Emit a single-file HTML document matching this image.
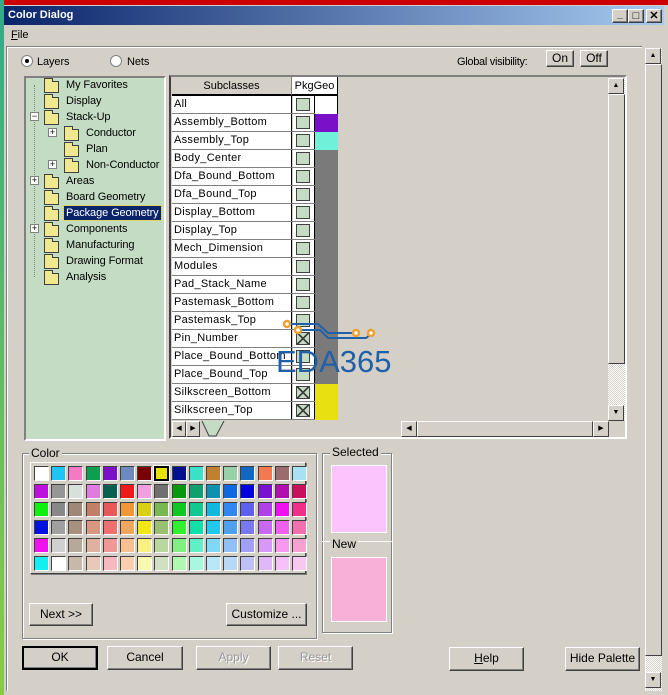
<!DOCTYPE html>
<html><head><meta charset="utf-8"><style>
*{box-sizing:border-box;margin:0;padding:0}
body{width:668px;height:695px;overflow:hidden;background:#d4d0c8;font-family:"Liberation Sans",sans-serif;font-size:11px;color:#000;position:relative}
.a{position:absolute}
.btn{position:absolute;background:#d4d0c8;border:1px solid;border-color:#fff #404040 #404040 #fff;box-shadow:inset -1px -1px 0 #808080;text-align:center;font-size:12px;line-height:20px}
.sunk{border:1px solid;border-color:#808080 #fff #fff #808080}
.grp{position:absolute;border:1px solid #808080;box-shadow:1px 1px 0 #fff, inset 1px 1px 0 #fff}
.lbl{position:absolute;background:#d4d0c8;padding:0 2px;font-size:12px;line-height:12px}
.ti{position:absolute;font-size:12px;line-height:14px;white-space:nowrap}
.tr{font-size:11px;letter-spacing:-.1px}
.fold{position:absolute;width:15px;height:12px;background:#f0e890;border:1px solid #404040}
.fold:before{content:"";position:absolute;left:-1px;top:-4px;width:7px;height:3px;background:#f0e890;border:1px solid #404040;border-bottom:none}
.pl{position:absolute;width:9px;height:9px;border:1px solid #808080;background:#fff;font-size:9px;line-height:7px;text-align:center}
.row{position:absolute;left:172px;width:166px;height:18px;border-bottom:1px solid #808080}
.row .n{position:absolute;left:0;top:0;width:120px;height:17px;background:#fff;border-right:1px solid #000;padding-left:2px;font-size:11px;line-height:17px;letter-spacing:.3px;white-space:nowrap;overflow:hidden}
.row .c{position:absolute;left:121px;top:0;width:22px;height:17px;background:#fff;border-right:1px solid #000}
.row .c i{position:absolute;left:3px;top:2px;width:14px;height:13px;background:#c4dcc4;border:1px solid #404040}
.row .k{position:absolute;left:143px;top:0;width:23px;height:18px;background:#7a7a7a}
.x:after{content:"";position:absolute;inset:0;background:linear-gradient(45deg,transparent 45%,#404040 45%,#404040 55%,transparent 55%),linear-gradient(-45deg,transparent 45%,#404040 45%,#404040 55%,transparent 55%)}
.sb{position:absolute;background:#e8e6e0}
.arr{position:absolute;width:16px;height:16px;background:#d4d0c8;border:1px solid;border-color:#fff #404040 #404040 #fff;font-size:7px;line-height:14px;text-align:center}
</style></head><body>
<div class="a" style="left:0;top:0;width:668px;height:5px;background:#c00"></div>
<div class="a" style="left:0;top:0;width:4px;height:695px;background:linear-gradient(#3a8,#8c4)"></div>
<div class="a" style="top:5px;left:4px;width:664px;height:690px;background:#d4d0c8"></div>
<div class="a" style="left:4px;top:6px;width:660px;height:19px;background:linear-gradient(90deg,#0a246a,#a6caf0);color:#fff;font-weight:bold;font-size:11px;line-height:19px;padding-left:4px">Color Dialog</div>
<div class="btn" style="left:612px;top:9px;width:16px;height:14px;font-size:10px;line-height:10px;font-weight:bold">_</div>
<div class="btn" style="left:628px;top:9px;width:16px;height:14px;font-size:11px;line-height:12px">□</div>
<div class="btn" style="left:646px;top:9px;width:16px;height:14px;font-size:11px;line-height:12px;font-weight:bold">✕</div>
<div class="ti tr" style="left:11px;top:28px"><u>F</u>ile</div>
<div class="a" style="left:6px;top:46px;width:636px;height:645px;border-top:1px solid #808080;border-left:1px solid #808080;box-shadow:inset 1px 1px 0 #fff"></div>
<!-- outer scrollbar -->
<div class="sb" style="left:645px;top:48px;width:17px;height:643px;background:repeating-conic-gradient(#fff 0 25%,#d4d0c8 0 50%) 0 0/2px 2px;border-left:1px solid #fff"></div>
<div class="arr" style="left:645px;top:48px">▲</div>
<div class="a" style="left:645px;top:64px;width:17px;height:592px;background:#d4d0c8;border:1px solid;border-color:#fff #404040 #404040 #fff"></div>
<div class="arr" style="left:645px;top:672px">▼</div>
<!-- radio -->
<div class="a" style="left:21px;top:55px;width:12px;height:12px;border-radius:50%;background:#fff;border:1px solid #808080"></div>
<div class="a" style="left:25px;top:59px;width:4px;height:4px;border-radius:50%;background:#000"></div>
<div class="ti tr" style="left:37px;top:55px">Layers</div>
<div class="a" style="left:110px;top:55px;width:12px;height:12px;border-radius:50%;background:#fff;border:1px solid #808080"></div>
<div class="ti tr" style="left:127px;top:55px">Nets</div>
<div class="ti" style="left:457px;top:55px;font-size:11px;letter-spacing:-.3px">Global visibility:</div>
<div class="btn" style="left:546px;top:50px;width:28px;height:17px;line-height:14px">On</div>
<div class="btn" style="left:580px;top:50px;width:28px;height:17px;line-height:14px">Off</div>
<!-- tree -->
<div class="a sunk" style="left:24px;top:76px;width:142px;height:365px;background:#c4dcc4;border-width:2px"></div>
<div class="a" style="left:34px;top:85px;width:0;height:192px;border-left:1px dotted #808080"></div>
<div class="fold" style="left:44px;top:81px"></div><div class="ti tr" style="left:66px;top:78px">My Favorites</div>
<div class="fold" style="left:44px;top:97px"></div><div class="ti tr" style="left:66px;top:94px">Display</div>
<div class="pl" style="left:30px;top:112px">−</div><div class="fold" style="left:44px;top:113px"></div><div class="ti tr" style="left:66px;top:110px">Stack-Up</div>
<div class="pl" style="left:48px;top:128px">+</div><div class="fold" style="left:64px;top:129px"></div><div class="ti tr" style="left:86px;top:126px">Conductor</div>
<div class="fold" style="left:64px;top:145px"></div><div class="ti tr" style="left:86px;top:142px">Plan</div>
<div class="pl" style="left:48px;top:160px">+</div><div class="fold" style="left:64px;top:161px"></div><div class="ti tr" style="left:86px;top:158px">Non-Conductor</div>
<div class="pl" style="left:30px;top:176px">+</div><div class="fold" style="left:44px;top:177px"></div><div class="ti tr" style="left:66px;top:174px">Areas</div>
<div class="fold" style="left:44px;top:193px"></div><div class="ti tr" style="left:66px;top:190px">Board Geometry</div>
<div class="fold" style="left:44px;top:209px"></div><div class="ti tr" style="left:64px;top:206px;background:#0a246a;color:#fff;padding:0 2px;outline:1px dotted #fc0">Package Geometry</div>
<div class="pl" style="left:30px;top:224px">+</div><div class="fold" style="left:44px;top:225px"></div><div class="ti tr" style="left:66px;top:222px">Components</div>
<div class="fold" style="left:44px;top:241px"></div><div class="ti tr" style="left:66px;top:238px">Manufacturing</div>
<div class="fold" style="left:44px;top:257px"></div><div class="ti tr" style="left:66px;top:254px">Drawing Format</div>
<div class="fold" style="left:44px;top:273px"></div><div class="ti tr" style="left:66px;top:270px">Analysis</div>
<!-- table area -->
<div class="a sunk" style="left:169px;top:75px;width:458px;height:364px;border-width:2px;border-color:#808080 #fff #fff #404040"></div>
<div class="a" style="left:172px;top:77px;width:120px;height:19px;border-right:1px solid #808080;border-bottom:2px solid #000;text-align:center;font-size:11px;line-height:18px">Subclasses</div>
<div class="a" style="left:292px;top:77px;width:46px;height:19px;background:#fff;border-right:1px solid #000;border-bottom:2px solid #000;text-align:center;font-size:11px;line-height:18px">PkgGeo</div>
<div class="row" style="top:96px"><div class="n">All</div><div class="c"><i></i></div><div class="k" style="background:#fff;border-right:1px solid #000"></div></div>
<div class="row" style="top:114px"><div class="n">Assembly_Bottom</div><div class="c"><i></i></div><div class="k" style="background:#7a10c8"></div></div>
<div class="row" style="top:132px"><div class="n">Assembly_Top</div><div class="c"><i></i></div><div class="k" style="background:#70f0d8"></div></div>
<div class="row" style="top:150px"><div class="n">Body_Center</div><div class="c"><i></i></div><div class="k"></div></div>
<div class="row" style="top:168px"><div class="n">Dfa_Bound_Bottom</div><div class="c"><i></i></div><div class="k"></div></div>
<div class="row" style="top:186px"><div class="n">Dfa_Bound_Top</div><div class="c"><i></i></div><div class="k"></div></div>
<div class="row" style="top:204px"><div class="n">Display_Bottom</div><div class="c"><i></i></div><div class="k"></div></div>
<div class="row" style="top:222px"><div class="n">Display_Top</div><div class="c"><i></i></div><div class="k"></div></div>
<div class="row" style="top:240px"><div class="n">Mech_Dimension</div><div class="c"><i></i></div><div class="k"></div></div>
<div class="row" style="top:258px"><div class="n">Modules</div><div class="c"><i></i></div><div class="k"></div></div>
<div class="row" style="top:276px"><div class="n">Pad_Stack_Name</div><div class="c"><i></i></div><div class="k"></div></div>
<div class="row" style="top:294px"><div class="n">Pastemask_Bottom</div><div class="c"><i></i></div><div class="k"></div></div>
<div class="row" style="top:312px"><div class="n">Pastemask_Top</div><div class="c"><i></i></div><div class="k"></div></div>
<div class="row" style="top:330px"><div class="n">Pin_Number</div><div class="c"><i class="x"></i></div><div class="k"></div></div>
<div class="row" style="top:348px"><div class="n">Place_Bound_Bottom</div><div class="c"><i></i></div><div class="k"></div></div>
<div class="row" style="top:366px"><div class="n">Place_Bound_Top</div><div class="c"><i></i></div><div class="k"></div></div>
<div class="row" style="top:384px"><div class="n">Silkscreen_Bottom</div><div class="c"><i class="x"></i></div><div class="k" style="background:#e8e010"></div></div>
<div class="row" style="top:402px"><div class="n">Silkscreen_Top</div><div class="c"><i class="x"></i></div><div class="k" style="background:#e8e010"></div></div>
<!-- watermark -->
<svg class="a" style="left:278px;top:318px" width="100" height="30"><g fill="none" stroke="#2060a8" stroke-width="2"><path d="M9 6 H40 L50 15 H75"/><path d="M20 12 H42 L50 20 H88 L92 17"/></g><g fill="#fff" stroke="#f0a030" stroke-width="2.5"><circle cx="9" cy="6" r="3"/><circle cx="20" cy="12" r="3"/><circle cx="78" cy="15" r="3"/><circle cx="93" cy="15" r="3"/></g></svg>
<div class="a" style="left:276px;top:345px;font-size:31px;line-height:34px;color:#2060a8;letter-spacing:0">EDA365</div>
<!-- inner vertical scroll -->
<div class="sb" style="left:608px;top:78px;width:17px;height:343px;background:repeating-conic-gradient(#fff 0 25%,#d4d0c8 0 50%) 0 0/2px 2px"></div>
<div class="arr" style="left:608px;top:78px">▲</div>
<div class="a" style="left:608px;top:94px;width:17px;height:270px;background:#d4d0c8;border:1px solid;border-color:#fff #404040 #404040 #fff"></div>
<div class="arr" style="left:608px;top:405px">▼</div>
<!-- horizontal -->
<div class="a" style="left:172px;top:421px;width:436px;height:16px;background:#d4d0c8"></div>
<div class="arr" style="left:172px;top:421px;width:14px">◀</div>
<div class="arr" style="left:186px;top:421px;width:14px">▶</div>
<svg class="a" style="left:200px;top:421px" width="26" height="16"><path d="M2 0 L9 15 H16 L24 0" fill="#c4dcc4" stroke="#404040"/></svg>
<div class="arr" style="left:401px;top:421px;width:16px">◀</div>
<div class="a" style="left:417px;top:421px;width:176px;height:16px;border:1px solid;border-color:#fff #404040 #404040 #fff"></div>
<div class="arr" style="left:593px;top:421px;width:16px">▶</div>
<!-- color group -->
<div class="grp" style="left:22px;top:453px;width:295px;height:186px"></div>
<div class="lbl" style="left:29px;top:447px">Color</div>
<div class="a" style="left:30px;top:462px;width:276px;height:112px;background:#d4d0c8;border:1px solid;border-color:#fff #404040 #404040 #fff;box-shadow:1px 1px 0 #808080" id="pal"></div>
<div class="grp" style="left:322px;top:453px;width:70px;height:180px"></div>
<div class="lbl" style="left:330px;top:446px">Selected</div>
<div class="a" style="left:331px;top:465px;width:56px;height:68px;background:#fcc4fc;border:1px solid #fff"></div>
<div class="a" style="left:322px;top:541px;width:70px;height:1px;background:#fff"></div>
<div class="lbl" style="left:330px;top:538px">New</div>
<div class="a" style="left:331px;top:557px;width:56px;height:65px;background:#f8b0d8;border:1px solid #fff"></div>
<div class="btn" style="left:29px;top:603px;width:64px;height:23px">Next &gt;&gt;</div>
<div class="btn" style="left:226px;top:603px;width:81px;height:23px">Customize ...</div>
<div class="btn" style="left:22px;top:646px;width:76px;height:24px;border:2px solid #000;line-height:19px">OK</div>
<div class="btn" style="left:107px;top:646px;width:76px;height:24px">Cancel</div>
<div class="btn" style="left:196px;top:646px;width:75px;height:24px;color:#999;text-shadow:1px 1px #fff">Apply</div>
<div class="btn" style="left:278px;top:646px;width:75px;height:24px;color:#999;text-shadow:1px 1px #fff">Reset</div>
<div class="btn" style="left:449px;top:647px;width:75px;height:24px"><u>H</u>elp</div>
<div class="btn" style="left:565px;top:647px;width:75px;height:24px">Hide Palette</div>
<script>
var c=["fff,1ec4f4,f47ac4,0e9e50,7a10c8,6e88c0,7a0000,e8e000,00108e,3ce0c8,c08030,98d0a8,1068c0,f47850,9c6c6c,a8e0f4","c010e0,969696,d8e0dc,e07ce0,086050,f01818,f0a0e0,707070,089810,10a070,1090b0,1068e0,0000e0,7a10d0,b010b0,c8105c","10f010,888888,a08878,c08068,e85858,f09838,d8d010,78b850,10c820,10c890,10b8e0,3088f0,6060f0,b040e8,f010f0,f03088","0010e0,a0a0a0,a89080,d89880,f07070,f0a860,f0e810,98c070,30f030,10e0a8,20c8f0,50a0f0,7878f0,c868f0,f060f0,f070b0","f010f0,d0d0d0,b8a898,e0b0a0,f09898,f8c090,f8f080,b8d8a0,80f080,60f0c8,80d8f8,90c0f8,a0a0f8,d898f8,f898f0,f8a0d0","10f0f0,ffffff,c8b8a8,e8c8b8,f8b8c0,f8d0b0,f8f8b0,d0e0c0,b0f8b0,a8f8e0,b8e8f8,b8d8f8,c0c0f8,e0b8f8,f8c0f8,f8c8f0"];
var p=document.getElementById('pal'),h='';
c.forEach(function(r,i){r.split(',').forEach(function(v,j){var s=(i==0&&j==7)?'border:2px solid #000;outline:1px solid #fff;':'border:1px solid;border-color:#404040 #fff #fff #404040;';h+='<div style="position:absolute;left:'+(3+j*17.2)+'px;top:'+(3+i*18)+'px;width:15px;height:15px;background:#'+v+';'+s+'"></div>';});});
p.innerHTML=h;
</script>
</body></html>
